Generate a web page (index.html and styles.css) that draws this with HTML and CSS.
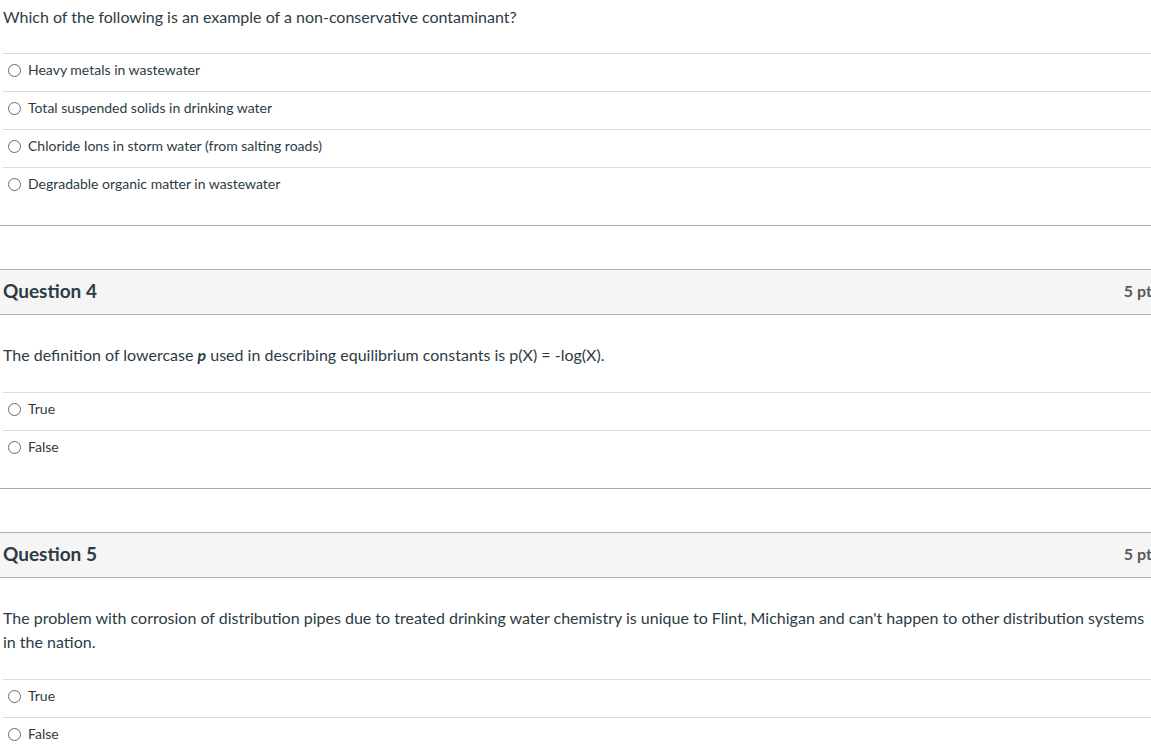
FILE: index.html
```html
<!DOCTYPE html>
<html lang="en">
<head>
<meta charset="utf-8">
<title>Quiz</title>
<link rel="stylesheet" href="styles.css">
</head>
<body>
<div class="page">
  <section class="question first">
    <div class="q-text">Which of the following is an example of a non-conservative contaminant?</div>
    <div class="answers">
      <label class="answer"><span class="radio"></span><span>Heavy metals in wastewater</span></label>
      <label class="answer"><span class="radio"></span><span>Total suspended solids in drinking water</span></label>
      <label class="answer"><span class="radio"></span><span>Chloride Ions in storm water (from salting roads)</span></label>
      <label class="answer"><span class="radio"></span><span>Degradable organic matter in wastewater</span></label>
    </div>
  </section>

  <section class="question">
    <header class="q-header"><h2 class="q-name">Question 4</h2><span class="q-points">5 pts</span></header>
    <div class="q-text">The definition of lowercase <strong><em>p</em></strong> used in describing equilibrium constants is p(X) = -log(X).</div>
    <div class="answers">
      <label class="answer"><span class="radio"></span><span>True</span></label>
      <label class="answer"><span class="radio"></span><span>False</span></label>
    </div>
  </section>

  <section class="question">
    <header class="q-header"><h2 class="q-name">Question 5</h2><span class="q-points">5 pts</span></header>
    <div class="q-text">The problem with corrosion of distribution pipes due to treated drinking water chemistry is unique to Flint, Michigan and can't happen to other distribution systems in the nation.</div>
    <div class="answers">
      <label class="answer"><span class="radio"></span><span>True</span></label>
      <label class="answer"><span class="radio"></span><span>False</span></label>
    </div>
  </section>
</div>
</body>
</html>
```

FILE: styles.css
```css
html, body {
  margin: 0;
  padding: 0;
  overflow: hidden;
  background: #ffffff;
}

body {
  font-family: Lato, "Open Sans", "Liberation Sans", sans-serif;
  color: #2d3b45;
}

.page {
  width: 1159px;
}

.question {
  border-bottom: 1px solid #a9a9a9;
  padding-bottom: 20px;
  margin-bottom: 43px;
}

.q-header {
  display: flex;
  justify-content: space-between;
  align-items: center;
  height: 41px;
  background: #f5f5f5;
  border-top: 1px solid #b0b0b0;
  border-bottom: 1px solid #b0b0b0;
  padding: 0 0 3px 3px;
}

.q-name {
  margin: 0;
  font-size: 19px;
  font-weight: 700;
  color: #2d3b45;
  line-height: 24px;
}

.q-points {
  font-size: 16px;
  font-weight: 700;
  color: #595959;
}

.q-text {
  font-size: 16px;
  line-height: 24px;
  padding: 28px 0 25px 3px;
  width: 1145px;
}

.question.first .q-text {
  padding-top: 5px;
  padding-bottom: 24px;
}

.answers {
  margin-left: 3px;
}

.answer {
  display: flex;
  align-items: center;
  gap: 7px;
  border-top: 1px solid #dcdcdc;
  padding: 6px 0 11px 5px;
  font-size: 14px;
  line-height: 20px;
  color: #2d3b45;
}

.radio {
  width: 11px;
  height: 11px;
  border: 1px solid #6b6b6b;
  border-radius: 50%;
  flex: none;
  margin-top: 1px;
}
```
